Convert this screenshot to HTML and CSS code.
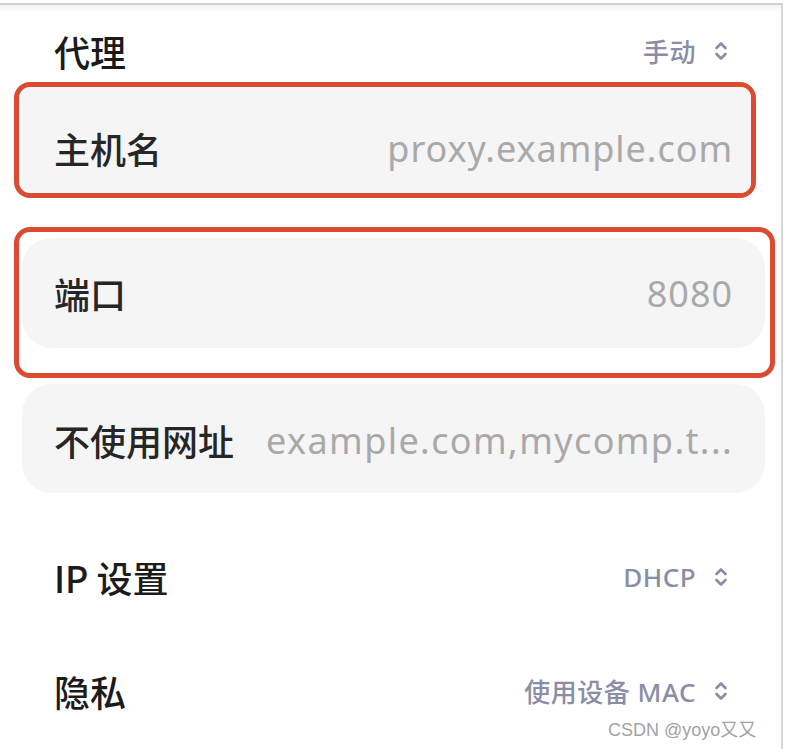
FILE: index.html
```html
<!DOCTYPE html>
<html lang="zh-CN">
<head>
<meta charset="utf-8">
<title>代理设置</title>
<link rel="stylesheet" href="styles.css">
</head>
<body>
<div class="screen">
  <div class="panel">
    <div class="header-row">
      <span class="title">代理</span>
      <span class="select">手动
        <svg class="chev" viewBox="0 0 14 22" aria-hidden="true"><path d="M2.5 8 L7 3.5 L11.5 8 M2.5 14 L7 18.5 L11.5 14"/></svg>
      </span>
    </div>

    <div class="mark mark-one">
      <div class="field field-one">
        <span class="label">主机名</span>
        <span class="value">proxy.example.com</span>
      </div>
    </div>

    <div class="mark mark-two">
      <div class="field field-two">
        <span class="label">端口</span>
        <span class="value">8080</span>
      </div>
    </div>

    <div class="field field-three">
      <span class="label">不使用网址</span>
      <span class="value wide">example.com,mycomp.t...</span>
    </div>

    <div class="setting-row first">
      <span class="title">IP 设置</span>
      <span class="select">DHCP
        <svg class="chev" viewBox="0 0 14 22" aria-hidden="true"><path d="M2.5 8 L7 3.5 L11.5 8 M2.5 14 L7 18.5 L11.5 14"/></svg>
      </span>
    </div>

    <div class="setting-row">
      <span class="title">隐私</span>
      <span class="select">使用设备 MAC
        <svg class="chev" viewBox="0 0 14 22" aria-hidden="true"><path d="M2.5 8 L7 3.5 L11.5 8 M2.5 14 L7 18.5 L11.5 14"/></svg>
      </span>
    </div>
  </div>
  <div class="watermark">CSDN @yoyo又又</div>
</div>
</body>
</html>
```

FILE: styles.css
```css
html, body {
  margin: 0;
  padding: 0;
  background: #ffffff;
}

.screen {
  position: relative;
  width: 787px;
  height: 749px;
  overflow: hidden;
  background: #ffffff;
  font-family: "Noto Sans", "Noto Sans CJK SC", sans-serif;
}

.panel {
  margin-top: 3px;
  width: 783px;
  height: 746px;
  border-top: 2px solid #d0d0d0;
  border-right: 2px solid #d3d8dd;
  box-shadow: inset 0 7px 6px -5px rgba(0, 0, 0, 0.08);
  box-sizing: border-box;
}

.header-row,
.setting-row {
  display: flex;
  align-items: center;
  justify-content: space-between;
  padding-left: 54px;
  padding-right: 53px;
}

.header-row {
  height: 77px;
  padding-top: 14px;
  box-sizing: border-box;
}

.setting-row {
  height: 114px;
}

.setting-row.first {
  margin-top: 27px;
}

.title {
  font-family: "Noto Sans CJK SC", sans-serif;
  font-size: 36px;
  font-weight: 500;
  color: #1b1b1b;
}

.select {
  display: flex;
  align-items: center;
  gap: 18px;
  font-family: "Noto Sans", "Noto Sans CJK SC", sans-serif;
  font-size: 26px;
  font-weight: 500;
  color: #8a8da5;
  letter-spacing: 0.5px;
}

.chev {
  width: 14px;
  height: 22px;
  fill: none;
  stroke: #8a8da5;
  stroke-width: 2.6;
  stroke-linecap: round;
  stroke-linejoin: round;
}

.mark {
  margin-left: 14px;
  border: 5px solid #dd4a32;
  border-radius: 16px;
  box-sizing: border-box;
}

.mark-one {
  width: 742px;
  height: 116px;
}

.mark-two {
  width: 761px;
  height: 151px;
  margin-top: 29px;
  padding-top: 6px;
  padding-left: 3px;
}

.field {
  display: flex;
  align-items: center;
  justify-content: space-between;
  background: #f5f5f5;
  box-sizing: border-box;
  padding-left: 32px;
  padding-right: 32px;
}

.field-one {
  margin-left: 3px;
  height: 106px;
  border-radius: 10px;
  padding-top: 16px;
  padding-right: 18px;
}

.field-two {
  width: 743px;
  height: 110px;
  border-radius: 30px;
}

.field-three {
  margin-left: 22px;
  margin-top: 6px;
  width: 743px;
  height: 109px;
  border-radius: 30px;
  padding-top: 3px;
}

.label {
  flex: none;
  font-family: "Noto Sans CJK SC", sans-serif;
  font-size: 36px;
  font-weight: 500;
  color: #262626;
}

.value {
  flex: 1;
  min-width: 0;
  margin-left: 30px;
  text-align: right;
  white-space: nowrap;
  overflow: hidden;
  font-family: "Noto Sans", sans-serif;
  font-size: 36px;
  font-weight: 400;
  letter-spacing: 0.95px;
  color: #a9a9a9;
}

.value.wide {
  letter-spacing: 1.4px;
}

.watermark {
  position: absolute;
  left: 608px;
  top: 718px;
  font-family: "Liberation Sans", "Noto Sans CJK SC", sans-serif;
  font-size: 18px;
  line-height: 24px;
  color: #a3a3a3;
  white-space: nowrap;
}
```
